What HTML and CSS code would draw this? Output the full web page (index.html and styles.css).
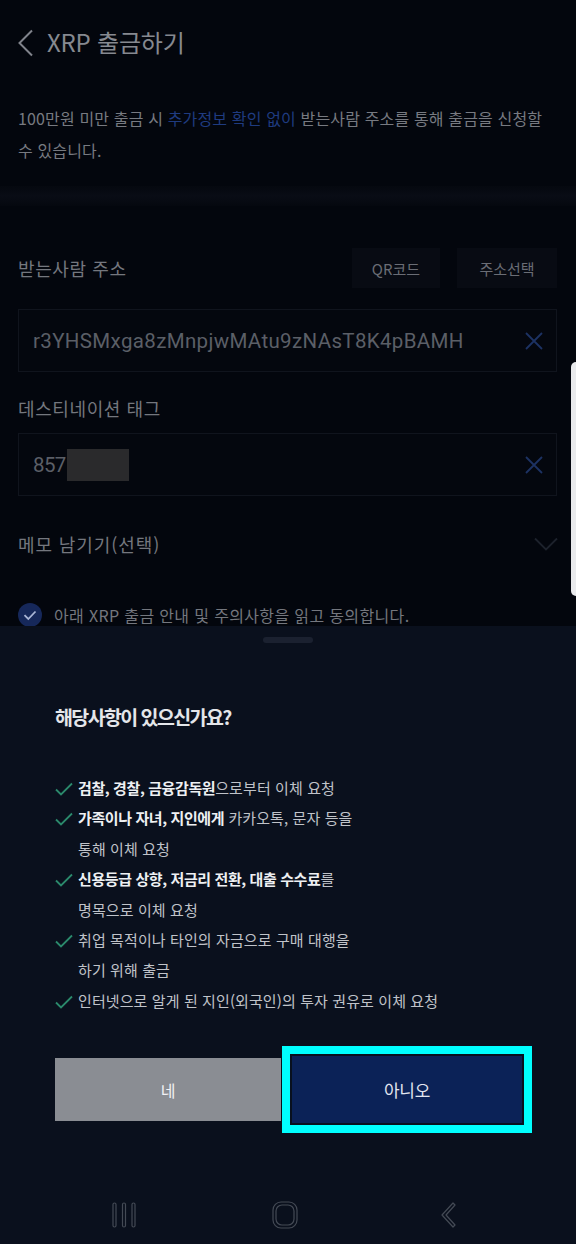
FILE: index.html
```html
<!DOCTYPE html>
<html lang="ko">
<head>
<meta charset="utf-8">
<title>XRP 출금하기</title>
<link rel="stylesheet" href="styles.css">
</head>
<body>
<div class="screen">
  <div class="page">
    <header class="top">
      <svg class="back" width="18" height="28" viewBox="0 0 18 28"><path d="M15 1.5 L2.5 14 L15 26.5" fill="none" stroke="#80838b" stroke-width="2"/></svg>
      <h1 class="title">XRP 출금하기</h1>
    </header>
    <p class="desc">100만원 미만 출금 시 <span class="hl">추가정보 확인 없이</span> 받는사람 주소를 통해 출금을 신청할<br>수 있습니다.</p>
    <div class="band"></div>
    <div class="form">
      <div class="label-row">
        <span class="label">받는사람 주소</span>
        <div class="btns">
          <span class="small-btn qr">QR코드</span>
          <span class="small-btn addr">주소선택</span>
        </div>
      </div>
      <div class="field f1">
        <span class="value">r3YHSMxga8zMnpjwMAtu9zNAsT8K4pBAMH</span>
        <svg class="clear" width="18" height="18" viewBox="0 0 18 18"><path d="M1 1 L17 17 M17 1 L1 17" stroke="#1d3263" stroke-width="1.8"/></svg>
      </div>
      <div class="label l2">데스티네이션 태그</div>
      <div class="field f2">
        <span class="value">857</span><span class="redact"></span>
        <svg class="clear" width="18" height="18" viewBox="0 0 18 18"><path d="M1 1 L17 17 M17 1 L1 17" stroke="#1d3263" stroke-width="1.8"/></svg>
      </div>
      <div class="memo">
        <span class="label">메모 남기기(선택)</span>
        <svg class="down" width="24" height="14" viewBox="0 0 24 14"><path d="M1 1.5 L12 12.5 L23 1.5" fill="none" stroke="#1d222c" stroke-width="1.8"/></svg>
      </div>
      <div class="agree">
        <svg class="circle" width="24" height="24" viewBox="0 0 24 24"><circle cx="12" cy="12" r="12" fill="#16285a"/><path d="M6.5 12.2 L10.3 16 L17.5 8.5" fill="none" stroke="#aab6d6" stroke-width="1.8"/></svg>
        <span class="agree-text">아래 XRP 출금 안내 및 주의사항을 읽고 동의합니다.</span>
      </div>
    </div>
  </div>

  <div class="sheet">
    <div class="handle"></div>
    <h2 class="sheet-title">해당사항이 있으신가요?</h2>
    <ul class="checks">
      <li><svg class="ck" width="18" height="14" viewBox="0 0 18 14"><path d="M1 7.5 L6 12.5 L17 1.5" fill="none" stroke="#2b8a6c" stroke-width="1.8"/></svg><span><b>검찰, 경찰, 금융감독원</b>으로부터 이체 요청</span></li>
      <li><svg class="ck" width="18" height="14" viewBox="0 0 18 14"><path d="M1 7.5 L6 12.5 L17 1.5" fill="none" stroke="#2b8a6c" stroke-width="1.8"/></svg><span><b>가족이나 자녀, 지인에게</b> 카카오톡, 문자 등을<br>통해 이체 요청</span></li>
      <li><svg class="ck" width="18" height="14" viewBox="0 0 18 14"><path d="M1 7.5 L6 12.5 L17 1.5" fill="none" stroke="#2b8a6c" stroke-width="1.8"/></svg><span><b>신용등급 상향, 저금리 전환, 대출 수수료</b>를<br>명목으로 이체 요청</span></li>
      <li><svg class="ck" width="18" height="14" viewBox="0 0 18 14"><path d="M1 7.5 L6 12.5 L17 1.5" fill="none" stroke="#2b8a6c" stroke-width="1.8"/></svg><span>취업 목적이나 타인의 자금으로 구매 대행을<br>하기 위해 출금</span></li>
      <li><svg class="ck" width="18" height="14" viewBox="0 0 18 14"><path d="M1 7.5 L6 12.5 L17 1.5" fill="none" stroke="#2b8a6c" stroke-width="1.8"/></svg><span>인터넷으로 알게 된 지인(외국인)의 투자 권유로 이체 요청</span></li>
    </ul>
    <div class="actions">
      <div class="btn yes">네</div>
      <div class="btn no">아니오</div>
    </div>
    <nav class="navbar">
      <svg class="nav-recent" width="24" height="26" viewBox="0 0 24 26"><rect x="1" y="1" width="3" height="24" rx="1.5" fill="none" stroke="#444a55" stroke-width="1.2"/><rect x="10.5" y="1" width="3" height="24" rx="1.5" fill="none" stroke="#444a55" stroke-width="1.2"/><rect x="20" y="1" width="3" height="24" rx="1.5" fill="none" stroke="#444a55" stroke-width="1.2"/></svg>
      <svg class="nav-home" width="26" height="28" viewBox="0 0 26 28"><rect x="1" y="1" width="24" height="26" rx="8" fill="none" stroke="#444a55" stroke-width="1.2"/><rect x="4" y="4" width="18" height="20" rx="6" fill="none" stroke="#444a55" stroke-width="1.2"/></svg>
      <svg class="nav-back" width="16" height="26" viewBox="0 0 16 26"><path d="M13 1 L2 13 L13 25 L15 23 L6 13 L15 3 Z" fill="none" stroke="#444a55" stroke-width="1.2" stroke-linejoin="round"/></svg>
    </nav>
  </div>

  <div class="edge"></div>
</div>
</body>
</html>
```

FILE: styles.css
```css
* { box-sizing: border-box; }
html, body { margin: 0; padding: 0; }
body {
  background: #03060d;
  font-family: "Noto Sans CJK KR", "Noto Sans", sans-serif;
}
.screen {
  position: relative;
  width: 576px;
  height: 1244px;
  overflow: hidden;
  display: flex;
  flex-direction: column;
}
.page {
  height: 626px;
  flex: none;
  overflow: hidden;
  background: #03060d;
}
.top {
  height: 84px;
  display: flex;
  align-items: center;
  padding-left: 17px;
  gap: 12px;
}
.back { display: block; margin-top: 1px; }
.title {
  margin: 0;
  font-size: 24px;
  font-weight: 400;
  letter-spacing: -0.2px;
  color: #868990;
  line-height: 30px;
}
.desc {
  margin: 18px 0 0;
  padding-left: 18px;
  font-size: 16px;
  line-height: 32px;
  letter-spacing: 0.15px;
  color: #777a81;
  white-space: nowrap;
}
.hl { color: #1f3b80; }
.band {
  margin-top: 20px;
  height: 20px;
  background: linear-gradient(#05080f, #090c15 50%, #05080f);
}
.form { padding: 0 19px 0 18px; }
.label-row {
  margin-top: 42px;
  height: 40px;
  display: flex;
  align-items: center;
  justify-content: space-between;
}
.label {
  font-size: 18px;
  letter-spacing: 0.6px;
  color: #74777e;
  line-height: 24px;
}
.memo .label { letter-spacing: 0.9px; }
.btns { display: flex; gap: 17px; }
.small-btn {
  height: 40px;
  display: flex;
  align-items: center;
  justify-content: center;
  background: #080b13;
  font-size: 15px;
  letter-spacing: 0;
  color: #6a6d75;
}
.qr { width: 88px; }
.addr { width: 100px; }
.field {
  height: 63px;
  border: 1px solid #10141d;
  background: #04070e;
  display: flex;
  align-items: center;
  padding: 0 13px 0 14px;
}
.f1 { margin-top: 21px; }
.l2 { margin-top: 24px; }
.f2 { margin-top: 13px; }
.value {
  font-family: Roboto, "Noto Sans", sans-serif;
  font-size: 20.5px;
  color: #5b5f67;
  letter-spacing: 0.35px;
}
.f2 .value { letter-spacing: -0.6px; }
.redact {
  width: 62px;
  height: 32px;
  background: #2a2a2c;
  margin-left: 1px;
}
.clear { margin-left: auto; display: block; }
.memo {
  margin-top: 33px;
  height: 30px;
  display: flex;
  align-items: center;
  justify-content: space-between;
}
.down { display: block; margin-right: -1px; }
.agree {
  margin-top: 44px;
  height: 24px;
  display: flex;
  align-items: center;
  gap: 12px;
}
.circle { display: block; flex: none; }
.agree-text {
  font-size: 16px;
  letter-spacing: 0.35px;
  color: #74777e;
  white-space: nowrap;
}
.sheet {
  flex: 1;
  background: #0a101d;
  display: flex;
  flex-direction: column;
}
.handle {
  margin: 11px auto 0;
  width: 50px;
  height: 6px;
  border-radius: 3px;
  background: #1b2130;
}
.sheet-title {
  margin: 61px 0 0;
  padding-left: 55px;
  font-size: 19.5px;
  font-weight: 700;
  letter-spacing: -1.6px;
  line-height: 26px;
  color: #e4e6ea;
}
.checks {
  list-style: none;
  margin: 43px 0 0;
  padding: 0 0 0 55px;
}
.checks li {
  display: flex;
  align-items: flex-start;
  gap: 5px;
  font-size: 15px;
  line-height: 30.4px;
  letter-spacing: 0.1px;
  color: #c0c3c9;
  white-space: nowrap;
}
.checks b { font-weight: 700; color: #eef0f3; letter-spacing: -0.4px; }
.ck { display: block; flex: none; margin-top: 9px; }
.actions {
  margin-top: 38px;
  padding-left: 55px;
  display: flex;
  align-items: center;
}
.btn {
  display: flex;
  align-items: center;
  justify-content: center;
}
.yes {
  width: 226px;
  height: 63px;
  background: #8a8d93;
  color: #f2f2f4;
  font-size: 16px;
}
.no {
  margin-left: 9px;
  width: 234px;
  height: 71px;
  background: #0b2257;
  border: 2px solid #08101f;
  outline: 8px solid #00ffff;
  color: #e2e6f0;
  font-size: 17px;
  letter-spacing: -0.3px;
}
.navbar {
  margin-top: 75px;
  height: 30px;
  display: flex;
  align-items: center;
}
.nav-recent { margin-left: 112px; display: block; }
.nav-home { margin-left: 136px; display: block; }
.nav-back { margin-left: 142px; display: block; }
.edge {
  position: absolute;
  left: 571px;
  top: 362px;
  width: 8px;
  height: 234px;
  background: #e9eaec;
  border-radius: 5px 0 0 5px;
}
```
